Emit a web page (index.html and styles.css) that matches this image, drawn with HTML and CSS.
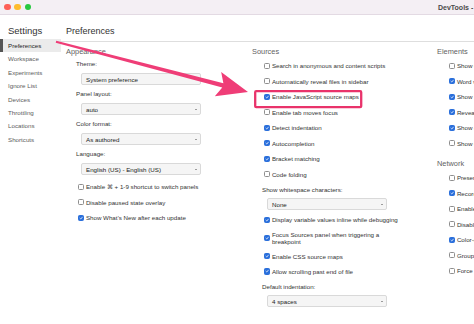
FILE: index.html
```html
<!DOCTYPE html>
<html lang="en">
<head>
<meta charset="utf-8">
<title>DevTools Settings</title>
<link rel="stylesheet" href="styles.css">
</head>
<body>
<div class="window">
  <header class="titlebar">
    <div class="lights">
      <span class="light red"></span>
      <span class="light yellow"></span>
      <span class="light green"></span>
    </div>
    <div class="title">DevTools -</div>
  </header>
  <div class="main">
    <nav class="sidebar">
      <div class="sb-title">Settings</div>
      <ul class="sb-list">
        <li class="sb-item active">Preferences</li>
        <li class="sb-item">Workspace</li>
        <li class="sb-item">Experiments</li>
        <li class="sb-item">Ignore List</li>
        <li class="sb-item">Devices</li>
        <li class="sb-item">Throttling</li>
        <li class="sb-item">Locations</li>
        <li class="sb-item">Shortcuts</li>
      </ul>
    </nav>
    <section class="content">
      <h1 class="content-title">Preferences</h1>
      <div class="columns">
        <div class="col col-appearance">
          <h2 class="section-title">Appearance</h2>
          <div class="field-label first">Theme:</div>
          <div class="select"><span>System preference</span><i class="caret"></i></div>
          <div class="field-label">Panel layout:</div>
          <div class="select"><span>auto</span><i class="caret"></i></div>
          <div class="field-label">Color format:</div>
          <div class="select"><span>As authored</span><i class="caret"></i></div>
          <div class="field-label">Language:</div>
          <div class="select"><span>English (US) - English (US)</span><i class="caret"></i></div>
          <div class="check-row after-select"><span class="cb"></span><span>Enable ⌘ + 1-9 shortcut to switch panels</span></div>
          <div class="check-row"><span class="cb"></span><span>Disable paused state overlay</span></div>
          <div class="check-row"><span class="cb on"><svg viewBox="0 0 10 10"><path d="M2.3 5.3 L4.3 7.3 L7.9 2.8"/></svg></span><span>Show What’s New after each update</span></div>
        </div>
        <div class="col col-sources">
          <h2 class="section-title">Sources</h2>
          <div class="check-row"><span class="cb"></span><span>Search in anonymous and content scripts</span></div>
          <div class="check-row"><span class="cb"></span><span>Automatically reveal files in sidebar</span></div>
          <div class="check-row"><span class="cb on"><svg viewBox="0 0 10 10"><path d="M2.3 5.3 L4.3 7.3 L7.9 2.8"/></svg></span><span>Enable JavaScript source maps</span></div>
          <div class="check-row"><span class="cb"></span><span>Enable tab moves focus</span></div>
          <div class="check-row"><span class="cb on"><svg viewBox="0 0 10 10"><path d="M2.3 5.3 L4.3 7.3 L7.9 2.8"/></svg></span><span>Detect indentation</span></div>
          <div class="check-row"><span class="cb on"><svg viewBox="0 0 10 10"><path d="M2.3 5.3 L4.3 7.3 L7.9 2.8"/></svg></span><span>Autocompletion</span></div>
          <div class="check-row"><span class="cb on"><svg viewBox="0 0 10 10"><path d="M2.3 5.3 L4.3 7.3 L7.9 2.8"/></svg></span><span>Bracket matching</span></div>
          <div class="check-row"><span class="cb"></span><span>Code folding</span></div>
          <div class="row-label">Show whitespace characters:</div>
          <div class="select tight"><span>None</span><i class="caret"></i></div>
          <div class="check-row after-select2"><span class="cb on"><svg viewBox="0 0 10 10"><path d="M2.3 5.3 L4.3 7.3 L7.9 2.8"/></svg></span><span>Display variable values inline while debugging</span></div>
          <div class="check-row two-line"><span class="cb on"><svg viewBox="0 0 10 10"><path d="M2.3 5.3 L4.3 7.3 L7.9 2.8"/></svg></span><span class="wrap">Focus Sources panel when triggering a breakpoint</span></div>
          <div class="check-row"><span class="cb on"><svg viewBox="0 0 10 10"><path d="M2.3 5.3 L4.3 7.3 L7.9 2.8"/></svg></span><span>Enable CSS source maps</span></div>
          <div class="check-row"><span class="cb on"><svg viewBox="0 0 10 10"><path d="M2.3 5.3 L4.3 7.3 L7.9 2.8"/></svg></span><span>Allow scrolling past end of file</span></div>
          <div class="row-label">Default indentation:</div>
          <div class="select tight"><span>4 spaces</span><i class="caret"></i></div>
        </div>
        <div class="col col-elements">
          <h2 class="section-title">Elements</h2>
          <div class="check-row"><span class="cb"></span><span>Show user agent shadow DOM</span></div>
          <div class="check-row"><span class="cb on"><svg viewBox="0 0 10 10"><path d="M2.3 5.3 L4.3 7.3 L7.9 2.8"/></svg></span><span>Word wrap</span></div>
          <div class="check-row"><span class="cb on"><svg viewBox="0 0 10 10"><path d="M2.3 5.3 L4.3 7.3 L7.9 2.8"/></svg></span><span>Show HTML comments</span></div>
          <div class="check-row"><span class="cb on"><svg viewBox="0 0 10 10"><path d="M2.3 5.3 L4.3 7.3 L7.9 2.8"/></svg></span><span>Reveal DOM node on hover</span></div>
          <div class="check-row"><span class="cb on"><svg viewBox="0 0 10 10"><path d="M2.3 5.3 L4.3 7.3 L7.9 2.8"/></svg></span><span>Show detailed inspect tooltip</span></div>
          <div class="check-row"><span class="cb"></span><span>Show CSS documentation tooltip</span></div>
          <h2 class="section-title later">Network</h2>
          <div class="check-row"><span class="cb"></span><span>Preserve log</span></div>
          <div class="check-row"><span class="cb on"><svg viewBox="0 0 10 10"><path d="M2.3 5.3 L4.3 7.3 L7.9 2.8"/></svg></span><span>Record network log</span></div>
          <div class="check-row"><span class="cb"></span><span>Enable request blocking</span></div>
          <div class="check-row"><span class="cb"></span><span>Disable cache</span></div>
          <div class="check-row"><span class="cb on"><svg viewBox="0 0 10 10"><path d="M2.3 5.3 L4.3 7.3 L7.9 2.8"/></svg></span><span>Color-code resource types</span></div>
          <div class="check-row"><span class="cb"></span><span>Group network log by frame</span></div>
          <div class="check-row"><span class="cb"></span><span>Force ad blocking</span></div>
        </div>
      </div>
    </section>
  </div>
  <svg class="annotation" viewBox="0 0 474 324" width="474" height="324" aria-hidden="true">
    <rect class="highlight" x="255.2" y="91.2" width="106" height="16" rx="1"/>
    <polygon class="arrow" points="56.28,40.64 223.40,83.28 221.17,72.06 248,92 214.83,96.24 222.28,87.54 55.72,42.76"/>
  </svg>
</div>
</body>
</html>
```
FILE: styles.css
```css
html, body {
  margin: 0;
  padding: 0;
}

body {
  width: 474px;
  height: 324px;
  overflow: hidden;
  background: #ffffff;
  font-family: "Liberation Sans", Arial, "Helvetica Neue", sans-serif;
  color: #333333;
}

.window {
  position: relative;
  width: 474px;
  height: 324px;
  overflow: hidden;
  background: #ffffff;
}

/* ---------- title bar ---------- */
.titlebar {
  height: 14px;
  border-bottom: 1px solid #e3dae3;
  background: #f4eff4;
  display: flex;
  align-items: center;
  padding-left: 4px;
}

.lights {
  display: flex;
  gap: 3.7px;
}

.light {
  width: 6.6px;
  height: 6.6px;
  border-radius: 50%;
}

.light.red { background: #fe5f57; }
.light.yellow { background: #febc2e; }
.light.green { background: #28c840; }

.title {
  margin-left: auto;
  width: 36px;
  white-space: nowrap;
  font-size: 7px;
  font-weight: bold;
  color: #4a4a4a;
}

/* ---------- main ---------- */
.main {
  display: flex;
  height: 309px;
}

.sidebar {
  width: 60px;
  flex: none;
  padding-top: 10px;
}

.sb-title {
  font-size: 9.5px;
  line-height: 12px;
  padding-left: 8px;
  color: #333333;
  margin-bottom: 2px;
}

.sb-list {
  list-style: none;
  margin: 0;
  padding: 0;
}

.sb-item {
  height: 13.4px;
  line-height: 13.4px;
  font-size: 6.2px;
  padding-left: 8px;
  color: #5c5c5c;
  white-space: nowrap;
}

.sb-item.active {
  background: #ebebeb;
  border-left: 3px solid #555555;
  padding-left: 5px;
  color: #222222;
  margin-right: -1px;
}

.content {
  flex: 1;
  min-width: 0;
}

.content-title {
  margin: 0;
  padding: 10px 0 4px 6px;
  border-bottom: 1px solid #dedede;
  font-size: 9px;
  line-height: 12px;
  font-weight: normal;
  color: #333333;
}

.columns {
  display: grid;
  grid-template-columns: 186px 185px 1fr;
  padding: 4px 0 0 6px;
}

.col {
  min-width: 0;
  white-space: nowrap;
}

.section-title {
  margin: 0;
  height: 12px;
  font-size: 7.4px;
  line-height: 12px;
  font-weight: normal;
  color: #5f5f5f;
}

.section-title.later {
  margin-top: 7px;
}

.field-label {
  font-size: 6.2px;
  line-height: 8px;
  padding-left: 10px;
  margin-top: 5px;
  color: #333333;
}

.field-label.first {
  margin-top: 2px;
}

.row-label {
  font-size: 6.2px;
  height: 15.5px;
  line-height: 15.5px;
  padding-left: 10px;
  color: #333333;
}

.select {
  margin: 5px 0 0 15px;
  width: 120px;
  height: 12px;
  box-sizing: border-box;
  border: 1px solid #d9d9d9;
  border-radius: 2px;
  background: #f5f5f5;
  font-size: 6.2px;
  color: #222222;
  display: flex;
  align-items: center;
  justify-content: space-between;
  padding: 0 3px 0 4px;
}

.select.tight {
  margin-top: 0.5px;
}

.caret {
  width: 0;
  height: 0;
  border-left: 1.2px solid transparent;
  border-right: 1.2px solid transparent;
  border-top: 1.6px solid #444444;
}

.check-row {
  display: flex;
  align-items: center;
  gap: 1.7px;
  height: 15.5px;
  padding-left: 12px;
  font-size: 6.2px;
  color: #333333;
}

.check-row.after-select {
  margin-top: 4px;
}

.check-row.after-select2 {
  margin-top: 2.2px;
}

.check-row.two-line {
  height: auto;
  padding-top: 3px;
  padding-bottom: 3px;
  line-height: 7.3px;
  white-space: normal;
}

.wrap {
  width: 112px;
}

.cb {
  width: 6.2px;
  height: 6.2px;
  box-sizing: border-box;
  border: 0.8px solid #8e8e8e;
  border-radius: 1.4px;
  background: #ffffff;
  flex: none;
  display: flex;
}

.cb.on {
  background: #2a6fdb;
  border-color: #2a6fdb;
}

.cb svg {
  width: 100%;
  height: 100%;
}

.cb svg path {
  fill: none;
  stroke: #ffffff;
  stroke-width: 1.7;
  stroke-linecap: round;
  stroke-linejoin: round;
}

/* ---------- annotation overlay ---------- */
.annotation {
  position: absolute;
  left: 0;
  top: 0;
  pointer-events: none;
}

.highlight {
  fill: none;
  stroke: #e9336b;
  stroke-width: 2.3;
}

.arrow {
  fill: #ef3d77;
}
```
